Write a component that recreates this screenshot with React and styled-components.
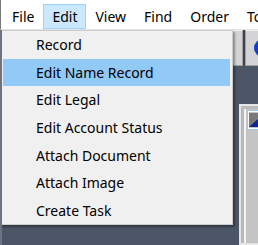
import React from 'react'
import styled, { createGlobalStyle } from 'styled-components'

const GlobalStyle = createGlobalStyle`
  html, body {
    margin: 0;
    padding: 0;
    width: 258px;
    height: 245px;
    overflow: hidden;
    background: #4b5565;
  }
  * { box-sizing: border-box; }
`

const menus = ['File', 'Edit', 'View', 'Find', 'Order', 'Tools']
const items = [
  'Record',
  'Edit Name Record',
  'Edit Legal',
  'Edit Account Status',
  'Attach Document',
  'Attach Image',
  'Create Task',
]

const App = () => {
  return (
    <Window>
      <GlobalStyle />
      <MenuBar>
        {menus.map(m => (
          <BarItem key={m} open={m === 'Edit'}>{m}</BarItem>
        ))}
      </MenuBar>

      <Workspace>
        <Toolbar>
          <ToolButton wide />
          <Divider />
          <ToolButton>
            <Globe viewBox="0 0 20 20">
              <circle cx="10" cy="10" r="9" fill="#1438c8" />
              <path d="M4 5 C6 3 9 2 11 3 C10 5 8 6 6 6 Z" fill="#2ea52e" />
              <path d="M12 8 C14 7 16 9 15 12 C13 12 12 10 12 8 Z" fill="#2ea52e" />
            </Globe>
          </ToolButton>
        </Toolbar>

        <Panel>
          <PanelInner>
            <Thumb viewBox="0 0 16 16">
              <rect width="16" height="16" fill="#7a7a7a" />
              <path d="M0 16 L9 8 L16 4 L16 16 Z" fill="#13238f" />
            </Thumb>
          </PanelInner>
        </Panel>

        <Dropdown>
          {items.map(i => (
            <MenuItem key={i} active={i === 'Edit Name Record'}>{i}</MenuItem>
          ))}
        </Dropdown>
      </Workspace>
    </Window>
  )
}

export default App

const Window = styled.div`
  width: 258px;
  height: 245px;
  display: flex;
  flex-direction: column;
  font-family: "Noto Sans", "Open Sans", sans-serif;
`

const MenuBar = styled.div`
  height: 30px;
  flex-shrink: 0;
  background: #ffffff;
  border-left: 1px solid #7a7a7a;
  border-bottom: 1px solid #e3e3e3;
  display: flex;
  align-items: flex-end;
  padding-left: 2px;
  white-space: nowrap;
`

const BarItem = styled.div`
  height: 25px;
  padding: 0 8px;
  display: flex;
  align-items: center;
  font-size: 14px;
  color: #000;
  border: 1px solid ${p => (p.open ? '#99d1ff' : 'transparent')};
  background: ${p => (p.open ? '#cce8ff' : 'transparent')};
`

const Workspace = styled.div`
  position: relative;
  flex: 1;
  background: #4b5565;
  border-left: 2px solid #6b7380;
  display: flex;
  flex-direction: column;
  overflow: hidden;
`

const Toolbar = styled.div`
  height: 36px;
  display: flex;
  align-items: stretch;
  padding-left: 200px;
`

const ToolButton = styled.div`
  width: ${p => (p.wide ? '41px' : '36px')};
  flex-shrink: 0;
  background: #d4d4d4;
  border: 1px solid #a0a0a0;
  border-top-color: #f0f0f0;
  display: flex;
  align-items: center;
  padding-left: 4px;
`

const Divider = styled.div`
  width: 2px;
  flex-shrink: 0;
  background: #3d4553;
`

const Globe = styled.svg`
  width: 20px;
  height: 22px;
  margin-left: 3px;
  flex-shrink: 0;
`

const Panel = styled.div`
  margin: 38px 0 0 237px;
  flex: 1;
  background: #b9b9b9;
  border: 2px solid #e6e6e6;
  border-right: none;
  padding: 3px 0 0 3px;
`

const PanelInner = styled.div`
  height: 100%;
  background: #c4c4c4;
  border-left: 2px solid #f4f4f4;
  padding: 2px 0 0 2px;
`

const Thumb = styled.svg`
  display: block;
  width: 16px;
  height: 18px;
  border: 1px solid #ffffff;
  outline: 1px solid #91c9f7;
`

const Dropdown = styled.div`
  position: absolute;
  top: 0;
  left: -2px;
  width: 233px;
  background: #f0f0f0;
  border: 1px solid #cccccc;
  padding: 0 2px;
  box-shadow: 2px 2px 2px rgba(0, 0, 0, 0.35);
`

const MenuItem = styled.div`
  height: 27.6px;
  display: flex;
  align-items: center;
  padding-left: 33px;
  font-size: 14px;
  color: #000;
  background: ${p => (p.active ? '#91c9f7' : 'transparent')};
`
